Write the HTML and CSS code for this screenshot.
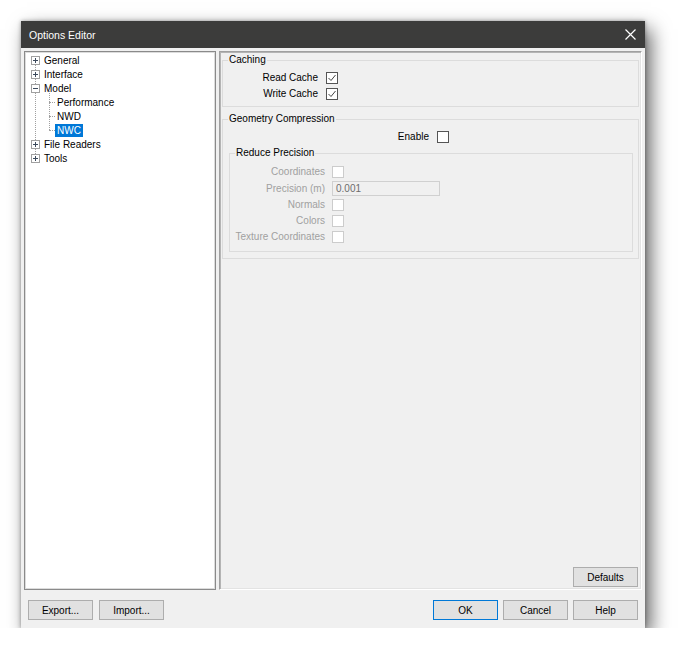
FILE: index.html
```html
<!DOCTYPE html>
<html>
<head>
    <meta charset="utf-8">
    <title>Options Editor</title>
    <link rel="stylesheet" href="styles.css">
</head>
<body>
    <div class="window">
        <div class="titlebar">
            <span class="title">Options Editor</span>
            <svg class="close" width="11" height="11" viewBox="0 0 11 11">
                <path d="M0.5 0.5 L10.5 10.5 M10.5 0.5 L0.5 10.5" stroke="#fff" stroke-width="1.2" fill="none"/>
            </svg>
        </div>

        <div class="body">
            <div class="main">
                <!-- 左侧树 -->
                <div class="tree-panel">
                    <ul class="tree roots">
                        <li class="row">
                            <svg class="exp" width="9" height="9" viewBox="0 0 9 9"><rect x="0.5" y="0.5" width="8" height="8" fill="#fff" stroke="#a0a0a0"/><path d="M2 4.5 H7 M4.5 2 V7" stroke="#3c4a5c"/></svg>
                            <span class="label">General</span>
                        </li>
                        <li class="row">
                            <svg class="exp" width="9" height="9" viewBox="0 0 9 9"><rect x="0.5" y="0.5" width="8" height="8" fill="#fff" stroke="#a0a0a0"/><path d="M2 4.5 H7 M4.5 2 V7" stroke="#3c4a5c"/></svg>
                            <span class="label">Interface</span>
                        </li>
                        <li>
                            <div class="row">
                                <svg class="exp" width="9" height="9" viewBox="0 0 9 9"><rect x="0.5" y="0.5" width="8" height="8" fill="#fff" stroke="#a0a0a0"/><path d="M2 4.5 H7" stroke="#3c4a5c"/></svg>
                                <span class="label">Model</span>
                            </div>
                            <ul class="tree children">
                                <li class="row child"><span class="label">Performance</span></li>
                                <li class="row child"><span class="label">NWD</span></li>
                                <li class="row child"><span class="label selected">NWC</span></li>
                            </ul>
                        </li>
                        <li class="row">
                            <svg class="exp" width="9" height="9" viewBox="0 0 9 9"><rect x="0.5" y="0.5" width="8" height="8" fill="#fff" stroke="#a0a0a0"/><path d="M2 4.5 H7 M4.5 2 V7" stroke="#3c4a5c"/></svg>
                            <span class="label">File Readers</span>
                        </li>
                        <li class="row">
                            <svg class="exp" width="9" height="9" viewBox="0 0 9 9"><rect x="0.5" y="0.5" width="8" height="8" fill="#fff" stroke="#a0a0a0"/><path d="M2 4.5 H7 M4.5 2 V7" stroke="#3c4a5c"/></svg>
                            <span class="label">Tools</span>
                        </li>
                    </ul>
                </div>

                <!-- 右侧选项 -->
                <div class="options-panel">
                    <fieldset class="group">
                        <legend>Caching</legend>
                        <div class="form-grid">
                            <span class="field-label">Read Cache</span>
                            <span class="check"><svg width="10" height="10" viewBox="0 0 10 10"><path d="M1.5 5 L4 7.5 L8.5 2" stroke="#444" fill="none"/></svg></span>
                            <span class="field-label">Write Cache</span>
                            <span class="check"><svg width="10" height="10" viewBox="0 0 10 10"><path d="M1.5 5 L4 7.5 L8.5 2" stroke="#444" fill="none"/></svg></span>
                        </div>
                    </fieldset>

                    <fieldset class="group geometry">
                        <legend>Geometry Compression</legend>
                        <div class="form-grid enable-row">
                            <span class="field-label">Enable</span>
                            <span class="check"></span>
                        </div>
                        <fieldset class="group inner">
                            <legend>Reduce Precision</legend>
                            <div class="form-grid disabled">
                                <span class="field-label">Coordinates</span>
                                <span class="check"></span>
                                <span class="field-label tall">Precision (m)</span>
                                <span class="text-input">0.001</span>
                                <span class="field-label">Normals</span>
                                <span class="check"></span>
                                <span class="field-label">Colors</span>
                                <span class="check"></span>
                                <span class="field-label">Texture Coordinates</span>
                                <span class="check"></span>
                            </div>
                        </fieldset>
                    </fieldset>

                    <div class="panel-actions">
                        <button class="btn">Defaults</button>
                    </div>
                </div>
            </div>

            <div class="footer">
                <div class="btn-group">
                    <button class="btn">Export...</button>
                    <button class="btn">Import...</button>
                </div>
                <div class="btn-group right">
                    <button class="btn default">OK</button>
                    <button class="btn">Cancel</button>
                    <button class="btn">Help</button>
                </div>
            </div>
        </div>
    </div>
</body>
</html>
```

FILE: styles.css
```css
* {
    margin: 0;
    padding: 0;
    box-sizing: border-box;
}
body {
    font-family: "Liberation Sans", Arial, sans-serif;
    font-size: 10px;
    background-color: #fff;
    color: #000;
}
.window {
    width: 624px;
    height: 607px;
    margin: 21px 0 0 21px;
    background-color: #f0f0f0;
    box-shadow: 6px 8px 18px rgba(0,0,0,0.6), 0 0 4px rgba(0,0,0,0.35);
    display: flex;
    flex-direction: column;
}
.titlebar {
    height: 27px;
    background-color: #3c3c3b;
    color: #fff;
    display: flex;
    align-items: center;
    justify-content: space-between;
    padding: 0 8px 0 8px;
    flex-shrink: 0;
}
.title {
    font-size: 10.5px;
}
.close {
    display: block;
    margin-right: 1px;
}
.body {
    flex: 1;
    display: flex;
    flex-direction: column;
    padding: 3px 3px 0 3px;
}
.main {
    height: 539px;
    display: flex;
    gap: 3px;
}

/* 树 */
.tree-panel {
    width: 192px;
    background-color: #fff;
    border: 1px solid #8a8a8a;
    box-shadow: inset 0 0 0 1px #dcdcdc;
    padding: 1px 0 0 6px;
}
.tree {
    list-style: none;
    position: relative;
}
.roots::before {
    content: '';
    position: absolute;
    left: 4px;
    top: 7px;
    bottom: 7px;
    border-left: 1px dotted #a0a0a0;
}
.row {
    height: 14px;
    display: flex;
    align-items: center;
    position: relative;
}
.exp {
    display: block;
    position: relative;
    z-index: 1;
    flex-shrink: 0;
}
.label {
    margin-left: 2px;
    padding: 0 2px;
    line-height: 13px;
    white-space: nowrap;
}
.children::before {
    content: '';
    position: absolute;
    left: 18px;
    top: -4px;
    bottom: 7px;
    border-left: 1px dotted #a0a0a0;
}
.child {
    padding-left: 24px;
}
.child::before {
    content: '';
    position: absolute;
    left: 18px;
    top: 7px;
    width: 6px;
    border-top: 1px dotted #a0a0a0;
}
.child .label {
    margin-left: 0;
}
.selected {
    background-color: #0078d7;
    color: #fff;
}

/* 选项面板 */
.options-panel {
    flex: 1;
    display: flex;
    flex-direction: column;
    border: 1px solid;
    border-color: #a0a0a0 #fff #fff #a0a0a0;
    box-shadow: inset 1px 1px 0 #b4b4b4, inset -1px -1px 0 #e3e3e3;
    padding: 2px 2px 2px 2px;
}
.group {
    border: 1px solid #dcdcdc;
    padding: 0 0 4px 0;
    margin: 0;
}
.group legend {
    margin-left: 5px;
    padding: 0 1px;
    line-height: 12px;
}
.geometry {
    margin-top: 6px;
    padding-bottom: 6px;
}
.inner {
    margin: 2px 5px 0 6px;
    padding-bottom: 6px;
}
.form-grid {
    display: grid;
    grid-template-columns: 95px auto;
    column-gap: 8px;
    align-items: center;
    justify-content: start;
    padding-top: 4px;
}
.inner .form-grid {
    column-gap: 7px;
    padding-top: 5px;
}
.field-label {
    text-align: right;
    line-height: 16px;
    white-space: nowrap;
}
.field-label.tall {
    line-height: 17px;
}
.check {
    width: 12px;
    height: 12px;
    border: 1px solid #555;
    background-color: #fff;
    display: flex;
    align-items: center;
    justify-content: center;
}
.enable-row {
    grid-template-columns: 206px auto;
    padding-top: 4px;
}
.disabled .field-label {
    color: #a0a0a0;
}
.disabled .check {
    border-color: #cccccc;
}
.text-input {
    width: 108px;
    height: 15px;
    border: 1px solid #d0d0d0;
    background-color: #f0f0f0;
    color: #6d6d6d;
    padding-left: 3px;
    line-height: 13px;
}
.panel-actions {
    margin-top: auto;
    display: flex;
    justify-content: flex-end;
    padding-right: 1px;
}

/* 按钮 */
.btn {
    width: 65px;
    height: 20px;
    font-family: "Liberation Sans", Arial, sans-serif;
    font-size: 10px;
    color: #000;
    background-color: #e1e1e1;
    border: 1px solid #adadad;
}
.btn.default {
    border-color: #0078d7;
}
.footer {
    display: flex;
    justify-content: space-between;
    padding: 10px 4px 0 4px;
}
.btn-group {
    display: flex;
    gap: 6px;
}
.btn-group.right {
    gap: 5px;
}
```
